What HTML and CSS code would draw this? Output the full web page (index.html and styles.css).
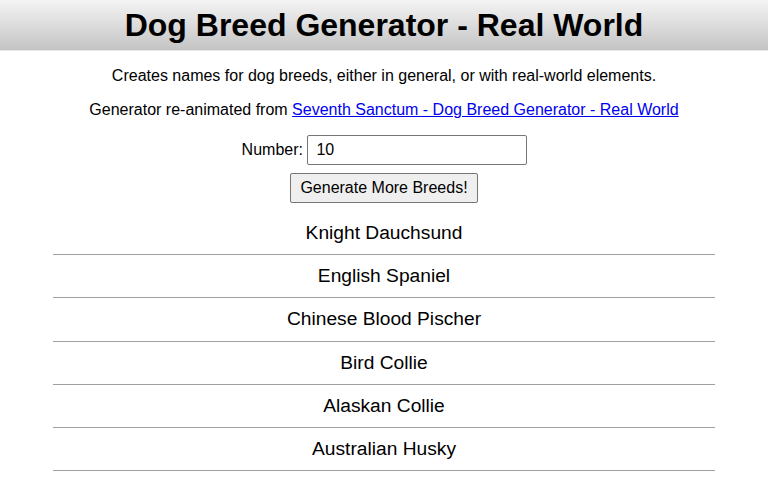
FILE: index.html
```html
<!DOCTYPE html>
<html>
<head>
<meta charset="utf-8">
<title>Dog Breed Generator - Real World</title>
<link rel="stylesheet" href="styles.css">
</head>
<body>
<header class="banner"><h1 class="title">Dog Breed Generator - Real World</h1></header>
<main class="content">
<p class="intro">Creates names for dog breeds, either in general, or with real-world elements.</p>
<p class="intro">Generator re-animated from <a class="link" href="#">Seventh Sanctum - Dog Breed Generator - Real World</a></p>
<div class="form">
<label class="field">Number: <input class="num" type="text" value="10"></label>
<button class="gen" type="button">Generate More Breeds!</button>
</div>
<ul class="results">
<li class="item">Knight Dauchsund</li>
<li class="item">English Spaniel</li>
<li class="item">Chinese Blood Pischer</li>
<li class="item">Bird Collie</li>
<li class="item">Alaskan Collie</li>
<li class="item">Australian Husky</li>
<li class="item">Tibetan Terrier</li>
<li class="item">Royal Setter</li>
<li class="item">Dutch Mastiff</li>
<li class="item">Lion Hound</li>
</ul>
</main>
</body>
</html>
```
FILE: styles.css
```css
html, body {
  margin: 0;
  padding: 0;
  background: #fff;
  font-family: "Liberation Sans", Arial, sans-serif;
  color: #000;
}
.banner {
  height: 50px;
  background: linear-gradient(to bottom, #f4f4f4, #c4c4c4);
  border-bottom: 1px solid #e8e8e8;
  display: flex;
  align-items: center;
  justify-content: center;
}
.title {
  margin: 0;
  font-size: 32px;
  font-weight: bold;
  line-height: 1;
}
.content {
  text-align: center;
}
.intro {
  margin: 16px 0 0;
  font-size: 16px;
  line-height: 18px;
}
.link {
  color: #0000ee;
}
.form {
  margin-top: 16px;
  display: flex;
  flex-direction: column;
  align-items: center;
  gap: 8px;
}
.field {
  font-size: 16px;
  padding-left: 1px;
}
.num {
  width: 220px;
  height: 30px;
  box-sizing: border-box;
  border: 1px solid #767676;
  border-radius: 2px;
  padding: 0 8px;
  font-family: "Liberation Sans", Arial, sans-serif;
  font-size: 16px;
}
.gen {
  height: 30px;
  padding: 0 9px;
  font-family: "Liberation Sans", Arial, sans-serif;
  font-size: 16px;
  background: #efefef;
  border: 1px solid #767676;
  border-radius: 2px;
  color: #000;
}
.results {
  list-style: none;
  margin: 9px 53px 0;
  padding: 0;
}
.item {
  font-size: 19.2px;
  line-height: 22.2px;
  padding: 10px 0 10px;
  border-bottom: 1px solid #a0a0a0;
}
```
